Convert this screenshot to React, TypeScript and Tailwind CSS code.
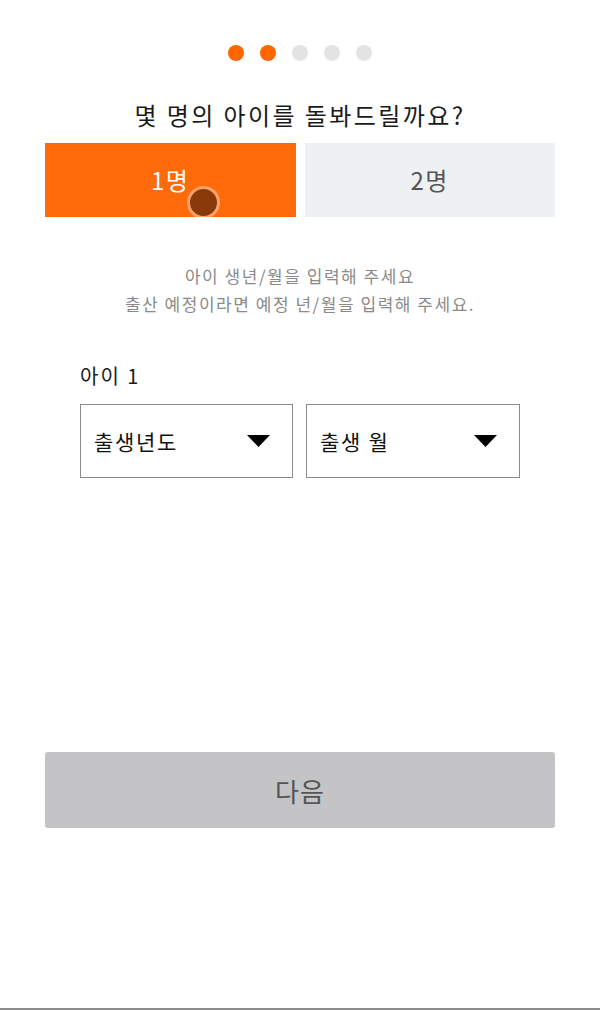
import React from 'react';

const font = { fontFamily: '"Noto Sans CJK KR", "Noto Sans", sans-serif' };

function Caret() {
  return (
    <svg width="23" height="12" viewBox="0 0 23 12" className="shrink-0">
      <path d="M0 0 H23 L11.5 12 Z" fill="#000" />
    </svg>
  );
}

function SelectBox({ label, width }: { label: string; width: string }) {
  return (
    <div className={`${width} h-[74px] border border-[#8a8a8a] bg-white flex items-center justify-between pl-[13px] pr-[22px]`}>
      <span className="text-[21px] text-[#111] leading-none tracking-[0.08em]">{label}</span>
      <Caret />
    </div>
  );
}

export default function App() {
  const dots = [true, true, false, false, false];
  return (
    <div className="w-[600px] h-[1010px] bg-white flex flex-col border-b-2 border-[#8c8c8c]" style={font}>
      <div className="flex justify-center gap-4 mt-[45px]">
        {dots.map((on, i) => (
          <span key={i} className={`w-4 h-4 rounded-full ${on ? 'bg-[#ff6600]' : 'bg-[#e3e2e5]'}`} />
        ))}
      </div>

      <h1 className="mt-[36px] text-center text-[24px] leading-[36px] text-[#1a1a1a] tracking-[0.1em]">몇 명의 아이를 돌봐드릴까요?</h1>

      <div className="mt-[10px] mx-[45px] flex gap-[9px]">
        <button className="relative flex-1 h-[74px] bg-[#ff6a0a] text-white text-[24px] tracking-[0.06em] flex items-center justify-center overflow-hidden">
          1명
          <span className="absolute left-[142px] top-[43px] w-[33px] h-[33px] rounded-full bg-[#8a3a08] border-[3px] border-[#f9a36a]" />
        </button>
        <button className="flex-1 h-[74px] bg-[#eef0f3] text-[#555] text-[24px] tracking-[0.06em] flex items-center justify-center">2명</button>
      </div>

      <div className="mt-[45px] text-center text-[17px] leading-[28px] text-[#8a8a8a] tracking-[0.09em]">
        <p>아이 생년/월을 입력해 주세요</p>
        <p>출산 예정이라면 예정 년/월을 입력해 주세요.</p>
      </div>

      <div className="mt-[44px] px-[80px]">
        <p className="text-[20px] leading-[28px] text-[#1a1a1a] tracking-[0.1em]">아이 1</p>
        <div className="mt-[14px] flex gap-[13px]">
          <SelectBox label="출생년도" width="w-[213px]" />
          <SelectBox label="출생 월" width="w-[214px]" />
        </div>
      </div>

      <button className="mt-[274px] mx-[45px] h-[76px] rounded-[3px] bg-[#c4c3c5] text-[#555] text-[26px] tracking-[0.04em] flex items-center justify-center">
        다음
      </button>
    </div>
  );
}
